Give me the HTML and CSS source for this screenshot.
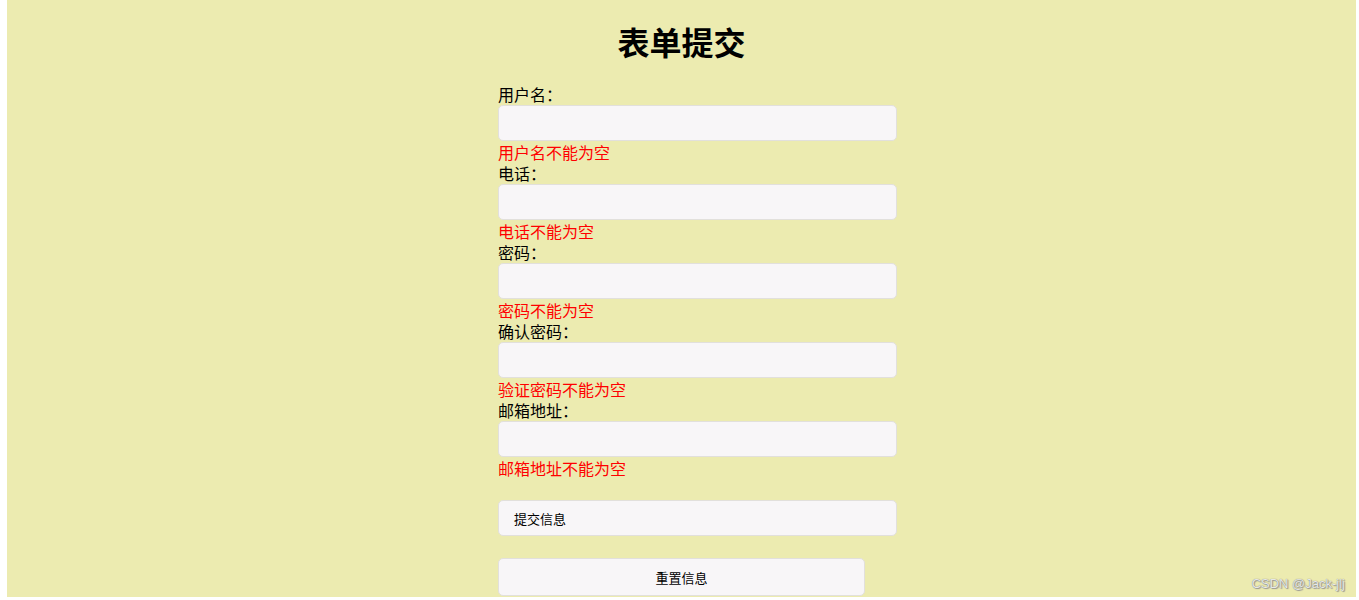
FILE: index.html
```html
<!DOCTYPE html>
<html lang="zh-CN">
<head>
<meta charset="utf-8">
<title>表单提交</title>
<link rel="stylesheet" href="styles.css">
</head>
<body>
<div class="page">
  <h1 class="title">表单提交</h1>
  <form class="form">
    <div class="field">
      <label class="label">用户名：</label>
      <input class="input" type="text">
      <div class="error">用户名不能为空</div>
    </div>
    <div class="field">
      <label class="label">电话：</label>
      <input class="input" type="text">
      <div class="error">电话不能为空</div>
    </div>
    <div class="field">
      <label class="label">密码：</label>
      <input class="input" type="password">
      <div class="error">密码不能为空</div>
    </div>
    <div class="field">
      <label class="label">确认密码：</label>
      <input class="input" type="password">
      <div class="error">验证密码不能为空</div>
    </div>
    <div class="field">
      <label class="label">邮箱地址：</label>
      <input class="input" type="text">
      <div class="error">邮箱地址不能为空</div>
    </div>
    <button class="btn btn-submit" type="button">提交信息</button>
    <button class="btn btn-reset" type="button">重置信息</button>
  </form>
  <div class="watermark">CSDN @Jack-jlj</div>
</div>
</body>
</html>
```

FILE: styles.css
```css
html, body {
  margin: 0;
  padding: 0;
  background: #ffffff;
}
body {
  font-family: "Noto Sans CJK SC", "Noto Sans", sans-serif;
  color: #000;
}
.page {
  position: relative;
  margin-left: 7px;
  width: 1349px;
  height: 597px;
  background: #ecebb0;
  overflow: hidden;
}
.title {
  margin: 0;
  padding-top: 20px;
  height: 42px;
  line-height: 42px;
  font-size: 32px;
  font-weight: 700;
  text-align: center;
  margin-bottom: 22px;
}
.form {
  width: 367px;
  margin: 0 auto;
  display: flex;
  flex-direction: column;
}
.field {
  display: flex;
  flex-direction: column;
}
.label {
  font-size: 16px;
  line-height: 21px;
  height: 21px;
}
.input {
  box-sizing: border-box;
  width: 399px;
  height: 36px;
  margin: 0;
  border: 1px solid #e2e0dc;
  border-radius: 5px;
  background: #f8f6f8;
  outline: none;
}
.error {
  color: #ff0000;
  font-size: 16px;
  line-height: 22px;
  height: 22px;
}
.btn {
  box-sizing: border-box;
  margin: 0;
  border: 1px solid #e2e0dc;
  border-radius: 5px;
  background: #f8f6f8;
  font-family: "Noto Sans CJK SC", sans-serif;
  font-size: 13px;
  color: #000;
  padding: 0;
}
.btn-submit {
  width: 399px;
  height: 36px;
  margin-top: 21px;
  text-align: left;
  padding-left: 15px;
}
.btn-reset {
  width: 367px;
  height: 38px;
  margin-top: 22px;
  text-align: center;
}
.watermark {
  position: absolute;
  right: 11px;
  bottom: 6px;
  font-family: "Liberation Sans", sans-serif;
  font-size: 13px;
  color: #e8e8e8;
  text-shadow: 0 0 1px #666, 1px 1px 1px #999;
}
```
